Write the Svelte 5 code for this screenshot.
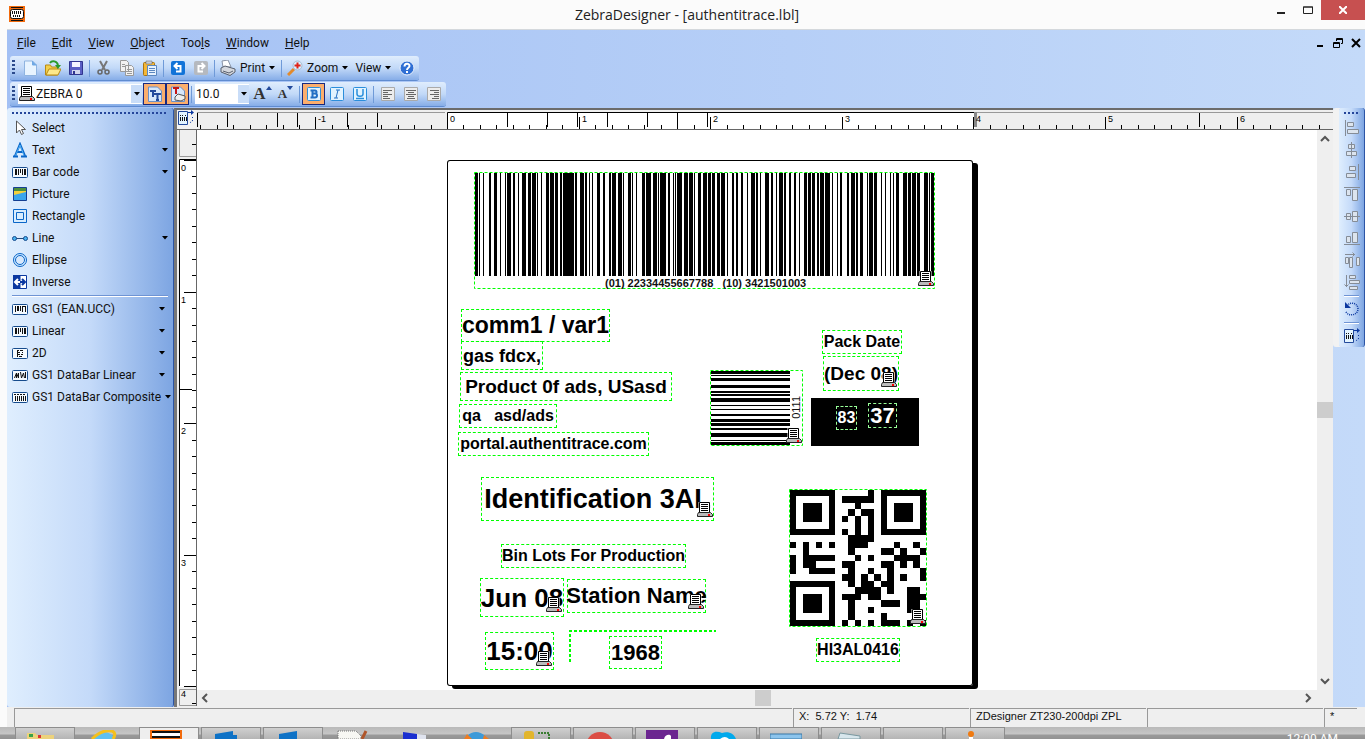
<script lang="ts">
  interface Field {
    readonly text: string;
    readonly x: number;
    readonly y: number;
    readonly w: number;
    readonly h: number;
    readonly size: number;
    readonly light?: boolean;
  }

  const DPI = 131.6;

  const menus = [
    ["", "F", "ile"],
    ["", "E", "dit"],
    ["", "V", "iew"],
    ["", "O", "bject"],
    ["Too", "l", "s"],
    ["", "W", "indow"],
    ["", "H", "elp"],
  ];

  const tools = [
    { label: "Select", icon: "select", more: false },
    { label: "Text", icon: "text", more: true },
    { label: "Bar code", icon: "bar", more: true },
    { label: "Picture", icon: "picture", more: false },
    { label: "Rectangle", icon: "rect", more: false },
    { label: "Line", icon: "line", more: true },
    { label: "Ellipse", icon: "ellipse", more: false },
    { label: "Inverse", icon: "inverse", more: false },
  ];

  const codes = [
    { label: "GS1 (EAN.UCC)", icon: "gs1" },
    { label: "Linear", icon: "bar" },
    { label: "2D", icon: "twod" },
    { label: "GS1 DataBar Linear", icon: "databar" },
    { label: "GS1 DataBar Composite", icon: "composite" },
  ];

  const aligns = ["left", "center", "right", "top", "middle", "bottom", "spaceh", "spacev"];

  // coordinates are in label pixels, measured from the label's outer corner
  const fields: Field[] = [
    { text: "comm1 / var1", x: 14, y: 149, w: 149, h: 33, size: 23 },
    { text: "gas fdcx,", x: 14, y: 181, w: 82, h: 29, size: 18 },
    { text: "Product 0f ads, USasd", x: 13, y: 212, w: 212, h: 29, size: 19 },
    { text: "qa   asd/ads", x: 12, y: 244, w: 98, h: 24, size: 16 },
    { text: "portal.authentitrace.com", x: 11, y: 272, w: 191, h: 24, size: 16 },
    { text: "Identification 3AL", x: 34, y: 317, w: 233, h: 44, size: 27 },
    { text: "Bin Lots For Production", x: 54, y: 384, w: 185, h: 24, size: 16 },
    { text: "Jun 08", x: 33, y: 418, w: 84, h: 39, size: 26 },
    { text: "Station Name", x: 120, y: 419, w: 139, h: 34, size: 22 },
    { text: "15:00", x: 38, y: 472, w: 69, h: 38, size: 26 },
    { text: "1968", x: 162, y: 476, w: 53, h: 33, size: 22 },
    { text: "Pack Date", x: 375, y: 170, w: 80, h: 24, size: 16 },
    { text: "(Dec 08)", x: 376, y: 196, w: 76, h: 35, size: 19 },
    { text: "HI3AL0416", x: 369, y: 478, w: 84, h: 24, size: 16 },
    { text: "83", x: 389, y: 246, w: 21, h: 24, size: 16, light: true },
    { text: "37", x: 421, y: 243, w: 29, h: 25, size: 22, light: true },
  ];

  const printerMarks = [
    [471, 111],
    [339, 268],
    [434, 212],
    [250, 342],
    [99, 437],
    [241, 434],
    [89, 491],
    [463, 449],
  ];

  const wideBars = parseBars(
    "0,3 4,1 8,1 14,2 19,3 25,1 30,1 32,4 38,2 43,1 47,4 53,3 57,4 62,1 66,1 71,3 75,4 80,3 85,2 88,11 " +
      "100,2 105,4 110,2 114,1 117,1 122,3 128,2 134,2 137,4 143,4 148,1 153,3 157,1 161,1 167,3 171,5 178,4 " +
      "183,1 185,6 193,2 198,1 200,1 202,5 209,4 214,4 219,1 223,3 228,4 233,3 237,3 242,3 246,4 252,1 257,2 " +
      "261,2 266,2 272,1 276,4 281,2 285,1 290,4 296,2 301,1 304,4 309,2 314,2 319,2 324,1 329,3 333,3 337,3 " +
      "342,2 345,4 350,5 357,1 362,1 365,2 372,2 376,4 381,2 385,3 392,1 394,4 399,3 406,1 410,1 415,1 418,1 " +
      "421,3 428,4 433,3 437,4 442,3 449,4 454,1 456,3",
  );

  const smallBars = parseBars(
    "0,3 4,1 7,3 14,3 20,2 23,2 27,4 34,1 38,1 43,2 48,3 52,3 57,2 62,4 69,1 71,3",
  );

  const qrRows = [
    "#######.....#.#######",
    "#.....#.#####.#.....#",
    "#.###.#...#...#.###.#",
    "#.###.#..#.##.#.###.#",
    "#.###.#.#.#.#.#.###.#",
    "#.....#...#.#.#.....#",
    "#######.#.#.#.#######",
    ".........####........",
    "#.#.#.#..###....#..#.",
    "..#......#....##.#..#",
    "#.#####...#.#...####.",
    "#.##....##....##.#.#.",
    "#..####..#..#..#....#",
    "........##.#.#.#.#..#",
    "#######..#.##.##.....",
    "#.....#...####.#..##.",
    "#.###.#.###.##....###",
    "#.###.#..#....###.##.",
    "#.###.#..#..#.....##.",
    "#.....#..#....#......",
    "#######.#.#.#.###.#.#",
  ];

  const tasks = [
    { icon: "folder", framed: true, active: false },
    { icon: "ie", framed: false, active: false },
    { icon: "zebra", framed: true, active: true },
    { icon: "outlook", framed: true, active: false },
    { icon: "office", framed: true, active: false },
    { icon: "notepad", framed: false, active: false },
    { icon: "monitor", framed: false, active: false },
    { icon: "firefox", framed: false, active: false },
    { icon: "database", framed: true, active: false },
    { icon: "red", framed: true, active: false },
    { icon: "purple", framed: true, active: false },
    { icon: "skype", framed: true, active: false },
    { icon: "photo", framed: true, active: false },
    { icon: "page", framed: true, active: false },
    { icon: "none", framed: true, active: false },
    { icon: "orange", framed: true, active: false },
  ];

  const acrossMinor = steps(-15, 53);
  const acrossMajor = [-1, 0, 1, 2, 3, 4, 5, 6];
  const acrossGuides = [0, 30, 80, 100, 150, 180, 310, 350, 380, 410, 450, 480, 510, 1002];
  const downMinor = steps(-1, 33);
  const downMajor = [0, 1, 2, 3, 4];

  let fontName = $state("ZEBRA 0");
  let fontSize = $state("10.0");
  let bold = $state(true);

  function parseBars(source: string): number[][] {
    return source.split(" ").map((pair) => pair.split(",").map(Number));
  }

  function steps(from: number, to: number): number[] {
    return Array.from({ length: to - from + 1 }, (_, index) => from + index);
  }

  function at(unit: number, origin: number): number {
    return Math.round(origin + unit * DPI);
  }
</script>

{#snippet arrow()}
  <svg class="arrow" width="6" height="4" aria-hidden="true"><path d="M0 0h6L3 3.500z" fill="#000" /></svg>
{/snippet}

{#snippet printer()}
  <svg width="16" height="16" viewBox="0 0 16 16" aria-hidden="true">
    <path d="M1.500 0h12v11h-12z" fill="#fff" />
    <path d="M2.500 11V.5h10V11" fill="none" stroke="#000" />
    <path d="M4 2.500h7M4 4.500h7M4 6.500h7M4 8.500h7" stroke="#000" />
    <path d="M1.500 10.500h12l2 2v2H.5v-2z" fill="#bbb" stroke="#222" />
    <path d="M11 12h2v2h-2z" fill="#f00" />
  </svg>
{/snippet}

{#snippet rotateIcon()}
  <svg width="18" height="16" viewBox="0 0 18 16" aria-hidden="true">
    <path d="M1.500 1.500h9v13h-9z" fill="#e3f4ff" stroke="#234a9c" />
    <path d="M3.500 5v1M5.500 5v1M8.500 5v1M3.500 7v4M5.500 7v4M7.500 7v4M9.500 7v4" stroke="#111" />
    <path d="M11 2.500h5" fill="none" stroke="#0b38a0" />
    <path d="M14 0l3 2.500L14 5z" fill="#0b38a0" />
    <path d="M15.500 7v3c0 2-1 2.500-4 2.500" fill="none" stroke="#0b38a0" stroke-dasharray="1 2" />
  </svg>
{/snippet}

{#snippet toolIcon(name: string)}
  <svg width="16" height="16" viewBox="0 0 16 16" aria-hidden="true">
    {#if name === "select"}
      <path d="M4.500 1v12l3-3 2 4.500 2-1-2-4h4z" fill="#fff" stroke="#555" />
    {:else if name === "text"}
      <path d="M1 14.500h5M9 14.500h6M3 14L8 2l5 12M5 10h6" fill="none" stroke="#0a66c8" stroke-width="2" />
      <path d="M3.500 13.500L8 3l4 10.500" fill="none" stroke="#5ec1ff" stroke-width=".8" />
    {:else if name === "picture"}
      <path d="M1.500 1.500h13v13h-13z" fill="#3aa5ec" stroke="#153f91" />
      <path d="M2 2h12v3H2z" fill="#4c8f3c" />
      <path d="M2 5h12v1L2 9z" fill="#f4d13c" />
    {:else if name === "rect"}
      <path d="M1.500 1.500h13v13h-13zM4.500 4.500h7v7h-7z" fill="#d7edff" stroke="#0a66c8" />
    {:else if name === "line"}
      <path d="M4 8.500h8" stroke="#234a7c" />
      <circle cx="2.500" cy="8.500" r="2" fill="#49b4f2" stroke="#164b8c" />
      <circle cx="13.500" cy="8.500" r="2" fill="#49b4f2" stroke="#164b8c" />
    {:else if name === "ellipse"}
      <circle cx="8" cy="8" r="6.500" fill="#cfe8ff" stroke="#0a66c8" />
      <circle cx="8" cy="8" r="4.500" fill="#d7e8fc" stroke="#0a66c8" />
    {:else if name === "inverse"}
      <path d="M1 1h7v14H1z" fill="#0b38a0" />
      <path d="M8 1.500h6.500v13H8z" fill="#fff" stroke="#0b38a0" />
      <path d="M6 5L3 8l3 3M3 8h5" fill="none" stroke="#fff" stroke-width="2" />
      <path d="M10 5l3 3-3 3M8 8h5" fill="none" stroke="#0b38a0" stroke-width="2" />
    {:else}
      <rect x=".5" y="3.500" width="15" height="10" rx="1" fill="#f4faff" stroke="#164b8c" />
      {#if name === "bar"}
        <path d="M3 5h2v6H3zM6 5h1v6H6zM8 5h1v4H8zM10 5h1v6h-1zM12 5h2v6h-2z" fill="#111" />
      {:else if name === "gs1"}
        <path d="M3 5h1v6H3zM5 5h2v5H5zM8 5h1v5H8zM10 5h1v6h-1zM11 5h2v1h-2zM13 5h1v6h-1z" fill="#111" />
      {:else if name === "twod"}
        <path d="M5 5.500h2M8 5.500h3M6 7.500h2M10 7.500h1M5 9.500h3M9 9.500h2M5 11.500h1M7 11.500h3M5.500 5v6" stroke="#111" />
      {:else if name === "databar"}
        <path d="M2.500 11l2-5v5l2-5v5M8.500 5l1 6 2-5 1 5M13.500 5v6" fill="none" stroke="#111" />
      {:else}
        <path d="M3.500 7v5M5.500 7v5M7.500 7v5M9.500 7v5M11.500 7v5M13.500 7v5" stroke="#111" />
        <path d="M2 5.500h12" stroke="#111" stroke-dasharray="2 1" />
      {/if}
    {/if}
  </svg>
{/snippet}

{#snippet barIcon(name: string)}
  <svg width="16" height="16" viewBox="0 0 16 16" aria-hidden="true">
    {#if name === "new"}
      <path d="M2.500 1h8l4 4v10.500h-12z" fill="#e8f4ff" stroke="#8fb4e0" />
      <path d="M10.500 1v4h4" fill="#6fa8e4" stroke="#6fa8e4" />
    {:else if name === "open"}
      <path d="M.5 5h5l1 2h6v8H.5z" fill="#f2cf4a" stroke="#b98a12" />
      <path d="M1 15l3-6h12l-3 6z" fill="#fde98a" stroke="#b98a12" />
      <path d="M5 3c2-3 7-2 8 2" fill="none" stroke="#2a9a2c" stroke-width="2" />
      <path d="M10 5h6l-3 4z" fill="#2a9a2c" />
    {:else if name === "save"}
      <path d="M1.500 1.500h13v13h-13z" fill="#5a5fc4" stroke="#31358f" />
      <path d="M4 2h8v5H4z" fill="#f4f5ff" />
      <path d="M4 10h8v4H4z" fill="#d3d6ee" />
      <path d="M5 11h2v3H5z" fill="#31358f" />
    {:else if name === "cut"}
      <path d="M4 1l5 9M11 1L6 10" stroke="#777" stroke-width="2" />
      <circle cx="4" cy="12" r="2" fill="none" stroke="#666" stroke-width="1.500" />
      <circle cx="11" cy="12" r="2" fill="none" stroke="#666" stroke-width="1.500" />
    {:else if name === "copy"}
      <path d="M1.500 .5h6l2 2v9h-8zM6.500 5.500h6l2 2v8h-8z" fill="#f2f2f2" stroke="#999" />
      <path d="M3 4.500h3M3 6.500h3M8 9.500h5M8 11.500h5M8 13.500h5" stroke="#999" />
    {:else if name === "paste"}
      <rect x="1.500" y="2.500" width="11" height="13" rx="1" fill="#f5b735" stroke="#a87412" />
      <path d="M4 1h6v3H4z" fill="#c8ccd4" stroke="#666" stroke-width=".5" />
      <path d="M5.500 5.500h9v10h-9z" fill="#e6f2ff" stroke="#5b87c0" />
      <path d="M7 8.500h6M7 10.500h6M7 12.500h6" stroke="#5b87c0" />
    {:else if name === "undo" || name === "redo"}
      <rect x="1" y="1" width="14" height="14" rx="2" fill={name === "undo" ? "#1173d8" : "#b5b9bf"} />
      {#if name === "undo"}
        <path d="M4 6h6.500v5.500H6M7.500 3L4.500 6l3 3" fill="none" stroke="#fff" stroke-width="2" />
      {:else}
        <path d="M12 6H5.500v5.500H10M8.500 3l3 3-3 3" fill="none" stroke="#fff" stroke-width="2" />
      {/if}
    {:else if name === "print"}
      <path d="M3 7l-1-6 6-1 3 7z" fill="#fff" stroke="#8a93a5" />
      <path d="M1 8l4-2 10 3v3l-5 3.500L1 12z" fill="#d5d8de" stroke="#59606e" />
      <path d="M3 11l6 2 4-2" fill="none" stroke="#59606e" />
    {:else if name === "zoom"}
      <path d="M1 15l6-6" stroke="#e28a2c" stroke-width="3" />
      <circle cx="10.500" cy="5.500" r="4.500" fill="#d9efff" stroke="#a8bccf" />
      <path d="M10.500 2.500v6M7.500 5.500h6" stroke="#e02418" stroke-width="2" />
    {:else if name === "help"}
      <circle cx="8" cy="8" r="7" fill="#2f6fd4" stroke="#eaf1fb" />
      <path d="M5.500 6.500c0-3.500 5-3.500 5-.5 0 2-2.500 1.500-2.500 4M8 11v2" fill="none" stroke="#fff" stroke-width="2" />
    {:else if name === "truetype" || name === "printerfont"}
      <path d="M1.500 1h9l4 4v10.500h-13z" fill="#d7e7fb" stroke="#6b8fc8" />
      {#if name === "truetype"}
        <path d="M3 5h6M6 5v6M7 8h7M10.500 8v6M9 14h3" stroke="#234a9c" stroke-width="2" />
      {:else}
        <path d="M3 2h6M6 2v6" stroke="#c41616" stroke-width="2" />
        <path d="M5 11l3-3 7 2v3l-4 2-6-1z" fill="#eee" stroke="#555" />
      {/if}
    {:else if name === "bold" || name === "italic" || name === "underline"}
      <rect x="1.500" y="1.500" width="13" height="13" rx="1" fill="#e2f3ff" stroke="#2b8edb" />
      {#if name === "bold"}
        <path d="M4.500 4.500H9q1.500 0 1.500 1.500T9 7.500H6.500H9q2 0 2 2t-2 2H4.500M6.500 4v8" fill="none" stroke="#2370c4" stroke-width="2" />
      {:else if name === "italic"}
        <path d="M7 4h4M5 12h4M9 4l-2 8" stroke="#2370c4" />
      {:else}
        <path d="M5 3v5c0 3 6 3 6 0V3M4 12.500h8" fill="none" stroke="#2b8edb" stroke-width="1.500" />
      {/if}
    {:else}
      <path d="M1.500 1.500h13v13h-13z" fill="#ececec" stroke="#aaa" />
      {#if name === "aleft"}
        <path d="M3 4.500h9M3 6.500h5M3 8.500h9M3 10.500h5M3 12.500h7" stroke="#666" />
      {:else if name === "acenter"}
        <path d="M3 4.500h10M5 6.500h6M3 8.500h10M5 10.500h6M4 12.500h8" stroke="#666" />
      {:else}
        <path d="M4 4.500h9M8 6.500h5M4 8.500h9M8 10.500h5M6 12.500h7" stroke="#666" />
      {/if}
    {/if}
  </svg>
{/snippet}

{#snippet alignIcon(name: string)}
  <svg width="16" height="16" viewBox="0 0 16 16" fill="#dce4ee" stroke="#858c96" aria-hidden="true">
    {#if name === "left"}
      <path d="M1.500 0v16M3.500 2.500h6v4h-6zM3.500 9.500h11v4h-11z" />
    {:else if name === "center"}
      <path d="M7.500 0v16M4.500 2.500h6v4h-6zM2.500 9.500h10v4h-10z" />
    {:else if name === "right"}
      <path d="M14.500 0v16M5.500 2.500h6v4h-6zM2.500 9.500h9v4h-9z" />
    {:else if name === "top"}
      <path d="M0 1.500h16M2.500 3.500h4v6h-4zM8.500 3.500h5v11h-5z" />
    {:else if name === "middle"}
      <path d="M0 8.500h16M2.500 5.500h4v6h-4zM8.500 3.500h5v10h-5z" />
    {:else if name === "bottom"}
      <path d="M0 14.500h16M2.500 6.500h4v6h-4zM8.500 2.500h5v10h-5z" />
    {:else if name === "spaceh"}
      <path d="M1 2.500h10M8.500 .5l2 2-2 2M1.500 5.500h3v6h-3zM5.500 5.500h3v10h-3zM12.500 5.500h3v8h-3z" />
    {:else}
      <path d="M2.500 1v12M.5 10.500l2 2 2-2M5.500 1.500h6v3h-6zM5.500 6.500h10v3h-10zM5.500 12.500h8v3h-8z" />
    {/if}
  </svg>
{/snippet}

<div class="window">
  <header class="titlebar">
    <svg class="app-icon" width="16" height="16" viewBox="0 0 16 16" aria-hidden="true">
      <path d="M0 0h16v16H0z" fill="#f26a0c" />
      <path d="M2 1.500h12M2 14.500h12" stroke="#111" />
      <rect x="1.500" y="3.500" width="13" height="9" rx="2" fill="#fff" stroke="#111" />
      <path d="M3.500 5v3M5.500 5v3M7.500 5v3M9.500 5v3M11.500 5v3M4.500 9v2M6.500 9v2M8.500 9v2M10.500 9v2" stroke="#111" />
    </svg>
    <h1>ZebraDesigner - [authentitrace.lbl]</h1>
    <div class="window-buttons">
      <button type="button" aria-label="Minimize">
        <svg width="10" height="10"><path d="M1 8h8" stroke="#222" stroke-width="2" /></svg>
      </button>
      <button type="button" aria-label="Maximize">
        <svg width="10" height="8"><path d="M.5 1h9v6.500h-9zM0 1h10" fill="none" stroke="#222" /></svg>
      </button>
      <button type="button" class="close" aria-label="Close">
        <svg width="8" height="8"><path d="M0 0l8 8M8 0L0 8" stroke="#fff" stroke-width="2" /></svg>
      </button>
    </div>
  </header>

  <div class="frame">
    <nav class="menubar">
      {#each menus as [before, key, after]}
        <button type="button">{before}<u>{key}</u>{after}</button>
      {/each}
      <div class="child-buttons">
        <button type="button" aria-label="Minimize document">
          <svg width="10" height="10"><path d="M2 8h6" stroke="#000" stroke-width="2" /></svg>
        </button>
        <button type="button" aria-label="Restore document">
          <svg width="10" height="10"><path d="M3.500 3V.5h6v5H8M3 1.500h6M.5 4.500h6v5h-6zM1 5.500h5" fill="none" stroke="#000" /></svg>
        </button>
        <button type="button" aria-label="Close document">
          <svg width="10" height="10"><path d="M1 1l8 8M9 1L1 9" stroke="#000" stroke-width="2" /></svg>
        </button>
      </div>
    </nav>

    <div class="toolbar" role="toolbar" aria-label="Standard">
      <i class="grip"></i>
      {#each ["new", "open", "save"] as icon}
        <button type="button" aria-label={icon}>{@render barIcon(icon)}</button>
      {/each}
      <i class="divider"></i>
      {#each ["cut", "copy", "paste"] as icon}
        <button type="button" aria-label={icon}>{@render barIcon(icon)}</button>
      {/each}
      <i class="divider"></i>
      {#each ["undo", "redo"] as icon}
        <button type="button" aria-label={icon}>{@render barIcon(icon)}</button>
      {/each}
      <i class="divider"></i>
      <button type="button" class="labelled">{@render barIcon("print")}<span>Print</span>{@render arrow()}</button>
      <i class="divider"></i>
      <button type="button" class="labelled">{@render barIcon("zoom")}<span>Zoom</span>{@render arrow()}</button>
      <button type="button" class="labelled"><span>View</span>{@render arrow()}</button>
      <button type="button" aria-label="help">{@render barIcon("help")}</button>
    </div>

    <div class="toolbar" role="toolbar" aria-label="Text">
      <i class="grip"></i>
      <label class="combo font-combo">
        {@render printer()}
        <select bind:value={fontName} aria-label="Font">
          <option>ZEBRA 0</option>
        </select>
        <span class="drop">{@render arrow()}</span>
      </label>
      <button type="button" class="on" aria-label="truetype">{@render barIcon("truetype")}</button>
      <button type="button" class="on" aria-label="printer font">{@render barIcon("printerfont")}</button>
      <i class="divider"></i>
      <label class="combo size-combo">
        <select bind:value={fontSize} aria-label="Font size">
          <option>10.0</option>
        </select>
        <span class="drop">{@render arrow()}</span>
      </label>
      <button type="button" class="grow" aria-label="Grow font">A<svg width="6" height="4"><path d="M0 4h6L3 0z" fill="#234a9c" /></svg></button>
      <button type="button" class="grow small" aria-label="Shrink font">A<svg width="6" height="4"><path d="M0 0h6L3 4z" fill="#234a9c" /></svg></button>
      <i class="divider"></i>
      <button type="button" class:on={bold} aria-label="bold" onclick={() => (bold = !bold)}>{@render barIcon("bold")}</button>
      <button type="button" aria-label="italic">{@render barIcon("italic")}</button>
      <button type="button" aria-label="underline">{@render barIcon("underline")}</button>
      <i class="divider"></i>
      {#each ["aleft", "acenter", "aright"] as icon}
        <button type="button" aria-label={icon}>{@render barIcon(icon)}</button>
      {/each}
    </div>

    <main class="body">
      <aside class="toolbox">
        <i class="handle"></i>
        {#each tools as tool}
          <button type="button">
            {@render toolIcon(tool.icon)}<span>{tool.label}</span>
            {#if tool.more}{@render arrow()}{/if}
          </button>
        {/each}
        <hr />
        <div class="codes">
          {#each codes as code}
            <button type="button">{@render toolIcon(code.icon)}<span>{code.label}</span>{@render arrow()}</button>
          {/each}
        </div>
      </aside>

      <section class="editor">
        <div class="corner">{@render rotateIcon()}</div>

        <svg class="ruler" width="100%" height="20" aria-hidden="true">
          <path d="M0 2.500h248M778 2.500h1200" stroke="#999" />
          <path d="M250 2h528v18H250z" fill="#fff" />
          <path d="M250.500 20V2.500H778" fill="none" stroke="#000" />
          <path d="M778.500 2v15" stroke="#888" stroke-width="3" />
          {#each acrossMinor as step}
            <rect x={at(step / 8, 250)} y="15" width="1" height="5" />
          {/each}
          {#each acrossGuides as x}
            <rect {x} y="3" width="1" height="14" />
          {/each}
          {#each acrossMajor as unit}
            <rect x={at(unit, 250)} y="7" width="1" height="12" />
            <text x={at(unit, 253)} y="12">{unit}</text>
          {/each}
          <path d="M0 19.500h4000" stroke="#666" />
        </svg>

        <svg class="ruler" width="20" height="100%" aria-hidden="true">
          <path d="M2.500 0v26.500h17" fill="none" stroke="#999" />
          <path d="M2 29h18v528H2z" fill="#fff" />
          <path d="M2.500 556V29.500H20" fill="none" stroke="#000" />
          <path d="M20 559.500H2.500v16h17" fill="none" stroke="#999" />
          {#each downMinor as step}
            <rect x="15" y={at(step / 8, 30)} width="5" height="1" />
          {/each}
          {#each downMajor as unit}
            <rect x="7" y={at(unit, 30)} width="13" height="1" />
            <text x="4" y={at(unit, 41)}>{unit}</text>
          {/each}
          <rect x="3" y="259" width="12" height="1" />
          <path d="M19.500 0v576" stroke="#666" />
        </svg>

        <div class="viewport">
          <div class="canvas">
            <div class="label">
              <svg class="art" width="526" height="526" aria-hidden="true">
                <g fill="none" stroke="#0f0" stroke-dasharray="3 2">
                  <path d="M27.500 12.500h460v116h-460zM263.500 210.500h92v75h-92zM342.500 329.500h137v137h-137z" />
                  <path d="M123 502v-31h146" stroke-width="2" />
                </g>
                {#each wideBars as [x, width]}
                  <rect x={x + 28} y="13" {width} height="103" />
                {/each}
                {#each smallBars as [y, height]}
                  <rect x="264" y={y + 211} width="79" {height} />
                {/each}
                <rect x="364" y="238" width="108" height="48" />
                <svg x="343" y="330" width="136" height="136" viewBox="0 0 21 21" shape-rendering="crispEdges">
                  {#each qrRows as row, y}
                    {#each row.split("") as cell, x}
                      {#if cell === "#"}<rect {x} {y} width="1" height="1" />{/if}
                    {/each}
                  {/each}
                </svg>
              </svg>
              <span class="code-text">(01) 22334455667788&nbsp;&nbsp; (10) 3421501003</span>
              <span class="side-text">0111</span>
              {#each fields as field}
                <span
                  class="field"
                  class:light={field.light}
                  style="left: {field.x}px; top: {field.y}px; width: {field.w}px; height: {field.h}px; font-size: {field.size}px"
                >{field.text}</span>
              {/each}
              {#each printerMarks as [x, y]}
                <span class="mark" style="left: {x}px; top: {y}px">{@render printer()}</span>
              {/each}
            </div>
          </div>
          <div class="scroll vertical">
            <svg width="16" height="18"><path d="M4 11l4-4 4 4" /></svg>
            <i></i>
            <svg width="16" height="18"><path d="M4 7l4 4 4-4" /></svg>
          </div>
          <div class="scroll horizontal">
            <svg width="18" height="16"><path d="M10 4L6 8l4 4" /></svg>
            <i></i>
            <svg width="18" height="16"><path d="M7 4l4 4-4 4" /></svg>
          </div>
        </div>
      </section>

      <aside class="aligner">
        <i class="handle"></i>
        {#each aligns as name}
          <button type="button" aria-label={"align " + name}>{@render alignIcon(name)}</button>
        {/each}
        <hr />
        <button type="button" aria-label="rotate">
          <svg width="16" height="16"><path d="M3 5c3-5 11-3 11 3s-9 8-12 3" fill="none" stroke="#0b38a0" stroke-width="1.500" stroke-dasharray="1 1" /><path d="M1 1v6h6z" fill="#0b38a0" /></svg>
        </button>
        <hr />
        <button type="button" aria-label="rotate label">{@render rotateIcon()}</button>
      </aside>
    </main>

    <footer class="status">
      <span class="message"></span>
      <span class="position">X:&nbsp; 5.72 Y:&nbsp; 1.74</span>
      <span class="device">ZDesigner ZT230-200dpi ZPL</span>
      <span class="device"></span>
      <span class="flag">*</span>
    </footer>
  </div>

  <div class="taskbar">
    {#each tasks as task}
      <button type="button" class:framed={task.framed} class:active={task.active} aria-label={task.icon}>
        <svg width="32" height="9" aria-hidden="true">
          {#if task.icon === "folder"}
            <path d="M1 3h8l2 2h17v4H1z" fill="#ecd27c" />
            <path d="M3 4h4v3H3z" fill="#37a34a" /><path d="M12 5h3v3h-3z" fill="#d33" />
          {:else if task.icon === "ie"}
            <circle cx="16" cy="14" r="12" fill="#5ec0f0" />
            <path d="M4 9Q14-1 24 1q5 2 1 8" fill="none" stroke="#f4c01c" stroke-width="3" />
          {:else if task.icon === "zebra"}
            <path d="M0 0h32v9H0z" fill="#f26a0c" />
            <path d="M2 2h28v5H2z" fill="#fff" /><path d="M2 2h28M2 7h28" stroke="#111" stroke-width="2" />
          {:else if task.icon === "outlook"}
            <path d="M3 4l18-3v4h4v4H3z" fill="#0e72c6" />
          {:else if task.icon === "office"}
            <path d="M5 4l18-3v8H5z" fill="#0e72c6" />
          {:else if task.icon === "notepad"}
            <path d="M2 1h18l5 5v3H2z" fill="#f7f7f3" stroke="#777" stroke-dasharray="1 1" />
            <path d="M30 1l-4 8" stroke="#b0562a" stroke-width="3" />
          {:else if task.icon === "monitor"}
            <path d="M5 2l14 2v5H5z" fill="#1a2fd0" /><path d="M19 4l9 1v4h-9z" fill="#dfe3ee" />
          {:else if task.icon === "firefox"}
            <circle cx="16" cy="14" r="12" fill="#3d9ad8" />
            <path d="M4 9l3-5 5 5zM24 5l5 4h-6z" fill="#ef7d22" />
          {:else if task.icon === "database"}
            <rect x="2" y="1" width="10" height="12" rx="3" fill="#e2b52c" />
            <path d="M16 3h11v6" fill="none" stroke="#3a7d32" stroke-width="2" stroke-dasharray="2 1" />
          {:else if task.icon === "red"}
            <circle cx="16" cy="16" r="14" fill="#db4d44" />
          {:else if task.icon === "purple"}
            <path d="M0 0h32v9H0z" fill="#6b2590" /><path d="M18 9c1-5 6-5 7-3v3z" fill="#fff" />
          {:else if task.icon === "skype"}
            <path d="M3 9C2 2 8 0 14 3c7-2 12 1 14 6z" fill="#00a9ec" /><path d="M12 9q5-4 9 0z" fill="#fff" />
          {:else if task.icon === "photo"}
            <path d="M0 4h32v5H0z" fill="#8cc4ec" stroke="#3878a8" />
          {:else if task.icon === "page"}
            <path d="M8 3l20 3v3H6z" fill="#d7e6ec" stroke="#7a98a0" />
          {:else if task.icon === "orange"}
            <circle cx="15" cy="4" r="3" fill="#f07a10" /><path d="M13 7h4v2h-4z" fill="#fff" />
          {/if}
        </svg>
      </button>
    {/each}
    <time>12:00 AM</time>
  </div>
</div>

<style>
  :global(body) {
    margin: 0;
    overflow: hidden;
  }

  .window {
    display: flex;
    flex-direction: column;
    height: 100vh;
    background: #fbfbfb;
    font-family: Roboto, "Open Sans", sans-serif;
    font-size: 12px;
    color: #111;
  }

  button {
    display: flex;
    align-items: center;
    justify-content: center;
    margin: 0;
    border: 0;
    padding: 0;
    background: none;
    font: inherit;
    color: inherit;
  }

  svg {
    flex: none;
    display: block;
  }

  .titlebar {
    display: grid;
    grid-template-columns: 1fr auto 1fr;
    align-items: center;
    height: 29px;
    padding-left: 9px;
  }

  .app-icon {
    margin-bottom: 2px;
  }

  h1 {
    margin: 0;
    font-family: "Open Sans", sans-serif;
    font-size: 14px;
    font-weight: 400;
    color: #222;
  }

  .window-buttons {
    display: flex;
    justify-content: flex-end;
    align-self: start;
    height: 20px;
  }

  .window-buttons button {
    width: 27px;
  }

  .window-buttons .close {
    width: 44px;
    background: #c75050;
  }

  .frame {
    flex: 1;
    min-height: 0;
    display: flex;
    flex-direction: column;
    margin-left: 7px;
    border-top: 1px solid #d4d8dc;
    background: linear-gradient(90deg, #a3c0f4, #c4daf9);
  }

  .menubar {
    display: flex;
    align-items: center;
    gap: 16px;
    height: 26px;
    padding-left: 10px;
  }

  .child-buttons {
    display: flex;
    gap: 8px;
    margin-left: auto;
    padding-right: 4px;
  }

  .toolbar {
    display: flex;
    align-items: center;
    align-self: flex-start;
    height: 24px;
    margin: 0 0 2px 3px;
    padding-right: 1px;
    border-radius: 3px;
    background: linear-gradient(#e0edfd, #c2d9f8 50%, #86ade8);
    box-shadow: 0 1px 0 #5f8bd0;
  }

  .toolbar > button {
    width: 23px;
    height: 22px;
  }

  .toolbar > .labelled {
    width: auto;
    padding: 0 4px 0 3px;
    gap: 4px;
  }

  .toolbar > .on {
    box-sizing: border-box;
    border: 1px solid #1a2a80;
    background: #fcae6c;
  }

  .toolbar > .grow {
    font-family: "Liberation Serif", serif;
    font-size: 17px;
    font-weight: 700;
    color: #333;
  }

  .toolbar > .grow svg {
    align-self: flex-start;
    margin-top: 3px;
  }

  .toolbar > .small {
    font-size: 13px;
  }

  .grip {
    width: 3px;
    height: 16px;
    margin: 0 3px 0 2px;
    background: repeating-linear-gradient(#2b4a8c 0 2px, transparent 2px 4px);
  }

  .divider {
    width: 1px;
    height: 17px;
    margin: 0 2px;
    background: #6f9ad8;
  }

  .combo {
    display: flex;
    align-items: center;
    height: 20px;
    background: #fff;
  }

  .font-combo {
    width: 123px;
    margin-right: 1px;
    padding-left: 1px;
  }

  .size-combo {
    width: 54px;
    margin: 0 2px 0 1px;
  }

  select {
    flex: 1;
    min-width: 0;
    appearance: none;
    border: 0;
    padding: 0 0 0 1px;
    background: none;
    font: inherit;
    color: inherit;
  }

  .drop {
    display: grid;
    place-items: center;
    width: 11px;
    height: 18px;
    background: #c9ddf8;
  }

  .body {
    flex: 1;
    min-height: 0;
    display: flex;
  }

  .toolbox {
    flex: none;
    box-sizing: border-box;
    width: 167px;
    padding: 4px 5px 0;
    border-right: 1px solid #2d55a5;
    border-radius: 3px;
    background: linear-gradient(90deg, #dfeefe, #c4daf9 50%, #7da5e2);
  }

  .handle {
    display: block;
    height: 2px;
    background: repeating-linear-gradient(90deg, #24459a 0 2px, transparent 2px 4px);
  }

  .toolbox .handle {
    margin-bottom: 3px;
  }

  .toolbox button {
    justify-content: flex-start;
    width: 100%;
    height: 22px;
    gap: 4px;
    white-space: nowrap;
  }

  .toolbox .arrow {
    margin-left: auto;
  }

  .codes .arrow {
    margin-right: 3px;
  }

  hr {
    height: 1px;
    margin: 2px 0 1px;
    border: 0;
    border-bottom: 1px solid #fff;
    background: #6f94d4;
  }

  .editor {
    flex: 1;
    min-width: 0;
    display: grid;
    grid-template: 20px minmax(0, 1fr) / 20px minmax(0, 1fr);
    border-top: 2px solid #6b6b6b;
    border-left: 3px solid #777;
    background: #efefef;
    overflow: hidden;
  }

  .corner {
    overflow: hidden;
    border-bottom: 1px solid #666;
    background: #f2f2f2;
  }

  .ruler {
    font-family: "Liberation Sans", Arial, sans-serif;
    font-size: 9px;
    overflow: hidden;
  }

  .viewport {
    display: grid;
    grid-template: minmax(0, 1fr) 17px / minmax(0, 1fr) 16px;
  }

  .canvas {
    position: relative;
    overflow: hidden;
    background: #fff;
  }

  .label {
    position: absolute;
    left: 250px;
    top: 30px;
    width: 526px;
    height: 526px;
    border-radius: 3px;
    box-shadow: inset 0 0 0 1px #000, 5px 3px 0 #000;
    background: #fff;
  }

  .art {
    position: absolute;
    inset: 0;
  }

  .field {
    position: absolute;
    box-sizing: border-box;
    display: flex;
    align-items: center;
    justify-content: center;
    border: 1px dashed #0f0;
    font-family: "Liberation Sans", Arial, sans-serif;
    font-weight: 700;
    line-height: 1;
    white-space: pre;
    color: #000;
  }

  .light {
    color: #fff;
    border-color: #9f9;
  }

  .code-text {
    position: absolute;
    left: 158px;
    top: 117px;
    font: 700 11px/12px "Liberation Sans", Arial, sans-serif;
    white-space: nowrap;
  }

  .side-text {
    position: absolute;
    left: 343px;
    top: 236px;
    font: 11px/12px "Liberation Sans", Arial, sans-serif;
    writing-mode: vertical-rl;
    transform: rotate(180deg);
  }

  .mark {
    position: absolute;
  }

  .scroll {
    display: flex;
    justify-content: space-between;
    background: #efefef;
  }

  .scroll path {
    fill: none;
    stroke: #555;
    stroke-width: 2;
  }

  .scroll i {
    width: 16px;
    height: 16px;
    background: #cdcdcd;
  }

  .vertical {
    flex-direction: column;
  }

  .horizontal i {
    margin-left: 12px;
  }

  .aligner {
    flex: none;
    align-self: flex-start;
    box-sizing: border-box;
    width: 26px;
    margin-left: 6px;
    padding: 4px 5px 0;
    border-radius: 3px;
    border-right: 1px solid #2d55a5;
    background: linear-gradient(90deg, #dfeefe, #c4daf9 50%, #7da5e2);
    box-shadow: -6px 0 0 #f2f2f2;
  }

  .aligner button {
    width: 16px;
    height: 22px;
  }

  .aligner .handle {
    margin-bottom: 3px;
  }

  .status {
    display: flex;
    height: 19px;
    padding: 1px 7px 0;
    background: #efefef;
    font-family: "Liberation Sans", Arial, sans-serif;
    font-size: 11px;
  }

  .status span {
    box-sizing: border-box;
    margin-right: 1px;
    border-top: 1px solid #999;
    border-left: 1px solid #999;
    padding-left: 5px;
    line-height: 14px;
    white-space: nowrap;
  }

  .status .message {
    flex: 1;
  }

  .status .position,
  .status .device {
    width: 176px;
  }

  .status .flag {
    width: 33px;
  }

  .taskbar {
    flex: none;
    display: flex;
    gap: 2px;
    height: 12px;
    padding: 0 27px 0 15px;
    background: linear-gradient(#b9b9b9, #c6c6c6 7px, #9a9a9a 8px, #929292);
    overflow: hidden;
  }

  .taskbar button {
    flex: none;
    box-sizing: border-box;
    align-items: flex-end;
    width: 60px;
    height: 12px;
    padding-right: 6px;
    border: 1px solid transparent;
    border-bottom: 0;
  }

  .taskbar .framed {
    border-color: #8d8d8d;
    background: linear-gradient(#d0d0d0, #b4b4b4);
  }

  .taskbar .active {
    background: #eee;
  }

  time {
    margin: 4px 0 0 auto;
    font-size: 12px;
    line-height: 16px;
    color: #fff;
  }
</style>
